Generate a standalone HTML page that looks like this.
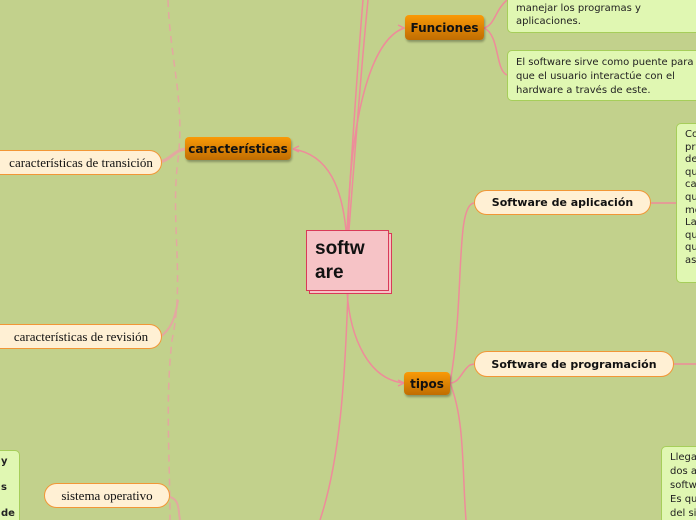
<!DOCTYPE html>
<html><head><meta charset="utf-8"><style>
html,body{margin:0;width:696px;height:520px;overflow:hidden}
body{background:#c2d18c;position:relative;font-family:"Liberation Sans",sans-serif}
.o{position:absolute;background:linear-gradient(#f99a07,#c06d02);border-radius:4px;box-shadow:1px 2px 2px rgba(0,0,0,.3);font-weight:bold;font-size:12px;color:#111;display:flex;align-items:center;justify-content:center;font-family:"DejaVu Sans",sans-serif}
.p{position:absolute;background:#fff0d4;border:1.5px solid #f29636;border-radius:13px;display:flex;align-items:center;justify-content:center;box-sizing:border-box;font-size:12px;color:#111}
.s{font-family:"Liberation Serif",serif;font-size:13px}
.b{font-family:"DejaVu Sans",sans-serif;font-weight:bold;font-size:11px}
.n{position:absolute;background:#e0f7b2;border:1.5px solid #a6ce5a;border-radius:5px;box-sizing:border-box;font-family:"DejaVu Sans",sans-serif;font-size:10px;line-height:14px;color:#222;padding:5px 8px;white-space:nowrap;overflow:hidden}
</style></head><body>
<svg width="696" height="520" style="position:absolute;left:0;top:0" fill="none" stroke="#ee8c9a" stroke-width="1.5">
<path d="M168 0 C170 60 185 100 178 160 C170 220 185 280 172 340 C165 400 170 460 170 520" stroke="#e3a8a0" stroke-dasharray="7 5"/>
<path d="M160 162 C170 160 175 150 185 149" stroke="#e3a8a0" stroke-width="3"/>
<path d="M160 337 C170 330 175 320 178 300" stroke="#e3a8a0" stroke-width="2"/>
<path d="M346 230 C342 190 330 155 293 149"/>
<path d="M293 149 l6 -3 M293 149 l6 3"/>
<path d="M348 230 C350 120 370 40 404 28"/>
<path d="M398 25 l6 3 l-6 3"/>
<path d="M347 230 C352 150 358 60 363 0"/>
<path d="M349 230 C355 150 362 60 368 0"/>
<path d="M347 291 C350 340 370 380 404 383"/>
<path d="M398 380 l6 3 l-6 3"/>
<path d="M348 291 C345 380 340 460 320 520"/>
<path d="M450 383 C460 383 462 370 470 365 L474 364" />
<path d="M450 383 C465 300 455 205 474 203"/>
<path d="M450 383 C465 420 462 470 466 520"/>
<path d="M651 203 H676" />
<path d="M674 364 H696" />
<path d="M484 28 C495 25 495 10 507 0"/>
<path d="M484 28 C500 35 495 70 507 75"/>
<path d="M170 497 C180 500 178 510 180 520" stroke="#e3a8a0" stroke-width="2"/>
</svg>
<div class="n" style="left:507px;top:-16px;width:200px;height:49px;padding-top:4px;line-height:13px">&nbsp;<br>manejar los programas y<br>aplicaciones.</div>
<div class="n" style="left:507px;top:50px;width:200px;height:51px;padding-top:5px">El software sirve como puente para<br>que el usuario interactúe con el<br>hardware a través de este.</div>
<div class="n" style="left:676px;top:123px;width:40px;height:160px;line-height:12.6px;padding-top:5px">Co<br>pr<br>de<br>qu<br>cas<br>qu<br>mó<br>Las<br>qu<br>qu<br>asi</div>
<div class="n" style="left:661px;top:446px;width:50px;height:80px;line-height:14px;padding-top:4px">Llegar<br>dos a<br>softw<br>Es qu<br>del sis</div>
<div class="n" style="left:-20px;top:450px;width:40px;height:80px;padding:4px 0 0 20px;font-weight:bold;line-height:13px">y<br><br>s<br><br>de</div>
<div class="o" style="left:405px;top:15px;width:79px;height:25px">Funciones</div>
<div class="o" style="left:185px;top:137px;width:106px;height:23px">características</div>
<div class="o" style="left:404px;top:372px;width:46px;height:23px">tipos</div>
<div class="p s" style="left:-20px;top:150px;width:182px;height:25px;padding-left:20px">características de transición</div>
<div class="p s" style="left:-20px;top:324px;width:182px;height:25px;padding-left:20px">características de revisión</div>
<div class="p s" style="left:44px;top:483px;width:126px;height:25px">sistema operativo</div>
<div class="p b" style="left:474px;top:190px;width:177px;height:25px">Software de aplicación</div>
<div class="p b" style="left:474px;top:351px;width:200px;height:26px">Software de programación</div>
<div style="position:absolute;left:309px;top:233px;width:83px;height:61px;background:#f6c3c6;border:1.5px solid #d93a58;box-sizing:border-box"></div>
<div style="position:absolute;left:306px;top:230px;width:83px;height:61px;background:#f6c3c6;border:1.5px solid #d93a58;box-sizing:border-box;padding:6px 0 0 8px;font-weight:bold;font-size:19px;line-height:24px;color:#111">softw<br>are</div>
</body></html>
